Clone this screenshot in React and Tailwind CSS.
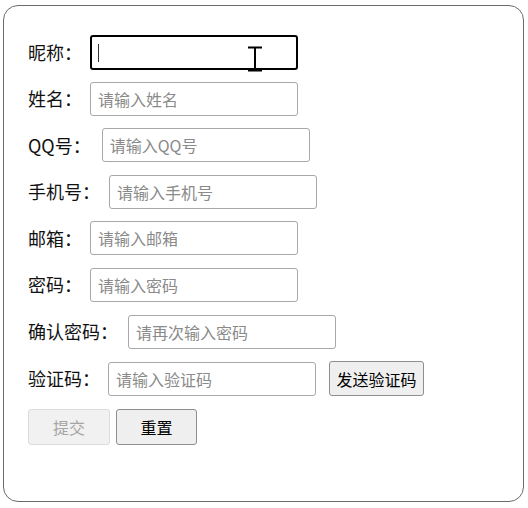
import React from "react";

const fields = [
  { label: "姓名：", placeholder: "请输入姓名", gap: "ml-2" },
  { label: "QQ号：", placeholder: "请输入QQ号", gap: "ml-[11px]" },
  { label: "手机号：", placeholder: "请输入手机号", gap: "ml-[9px]" },
  { label: "邮箱：", placeholder: "请输入邮箱", gap: "ml-2" },
  { label: "密码：", placeholder: "请输入密码", gap: "ml-2" },
  { label: "确认密码：", placeholder: "请再次输入密码", gap: "ml-[10px]" },
];

const font = { fontFamily: '"Noto Sans CJK SC", "Noto Sans", sans-serif' };

const inputClass =
  "h-[34px] w-[208px] rounded-[3px] border border-[#a8a8a8] bg-white px-[7px] text-[16px] text-black placeholder:text-[#8a8a8a] outline-none";

const App = () => {
  return (
    <div className="bg-white pl-[3px] pt-[5px]" style={font}>
      <div className="relative flex h-[497px] w-[521px] flex-col gap-[12.6px] rounded-[15px] border border-[#6b6b6b] pl-[24px] pt-[29px]">
        <div className="flex h-[34px] items-center">
          <span className="text-[18px] text-[#111]">昵称：</span>
          <div className="relative ml-2">
            <input
              type="text"
              className="h-[35px] w-[208px] rounded-[3px] border-2 border-black bg-white px-[7px] text-[16px] outline-none"
            />
            <span className="absolute left-[8px] top-[9px] h-[18px] w-px bg-[#333]" />
            <svg
              className="absolute left-[157px] top-[11px]"
              width="16"
              height="27"
              viewBox="0 0 16 27"
            >
              <path
                d="M1 1.5h14M8 1.5v23M1 24.5h14"
                stroke="black"
                strokeWidth="2"
                fill="none"
              />
            </svg>
          </div>
        </div>

        {fields.map((f) => (
          <div key={f.label} className="flex h-[34px] items-center">
            <span className="text-[18px] text-[#111]">{f.label}</span>
            <input
              type="text"
              placeholder={f.placeholder}
              className={`${f.gap} ${inputClass}`}
            />
          </div>
        ))}

        <div className="flex h-[35px] items-center">
          <span className="text-[18px] text-[#111]">验证码：</span>
          <input
            type="text"
            placeholder="请输入验证码"
            className={`ml-2 ${inputClass}`}
          />
          <button className="ml-[13px] h-[35px] w-[95px] rounded-[3px] border border-[#8f8f8f] bg-[#efefef] text-[16px] text-black">
            发送验证码
          </button>
        </div>

        <div className="flex gap-[6px]">
          <button
            disabled
            className="h-[36px] w-[82px] rounded-[3px] border border-[#dcdcdc] bg-[#f1f1f1] text-[16px] text-[#a5a5a5]"
          >
            提交
          </button>
          <button className="h-[36px] w-[81px] rounded-[3px] border border-[#8f8f8f] bg-[#efefef] text-[16px] text-black">
            重置
          </button>
        </div>
      </div>
    </div>
  );
};

export default App;
